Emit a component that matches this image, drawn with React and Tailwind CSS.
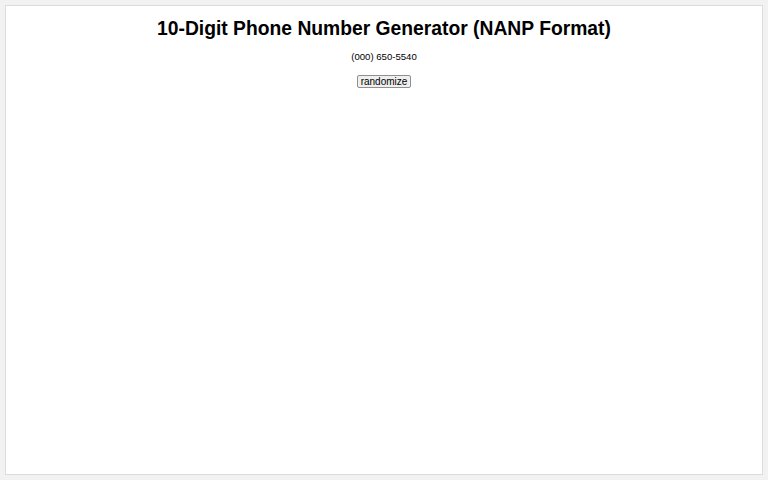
import { useState } from 'react';

// NANP-style: (AAA) EEE-SSSS
function randomNumber() {
  const d = (n) => Array.from({ length: n }, () => Math.floor(Math.random() * 10)).join('');
  return `(${d(3)}) ${d(3)}-${d(4)}`;
}

export default function App() {
  const [phone, setPhone] = useState('(000) 650-5540');

  return (
    <div className="h-[480px] bg-[#f2f2f2] p-[5px] font-['Liberation_Sans',Arial,sans-serif] text-black">
      <div className="h-[470px] bg-white border border-[#dcdcdc] flex flex-col items-center">
        <h1 className="mt-[11px] text-[19.3px] leading-[23px] font-bold">
          10-Digit Phone Number Generator (NANP Format)
        </h1>
        <p className="mt-[11px] text-[9.6px] leading-[11px]">{phone}</p>
        <button
          onClick={() => setPhone(randomNumber())}
          className="mt-[13px] h-[13px] w-[54px] flex items-center justify-center text-[10px] leading-[11px] bg-[#efefef] border border-[#8f8f8f] rounded-[2px]"
        >
          randomize
        </button>
      </div>
    </div>
  );
}
